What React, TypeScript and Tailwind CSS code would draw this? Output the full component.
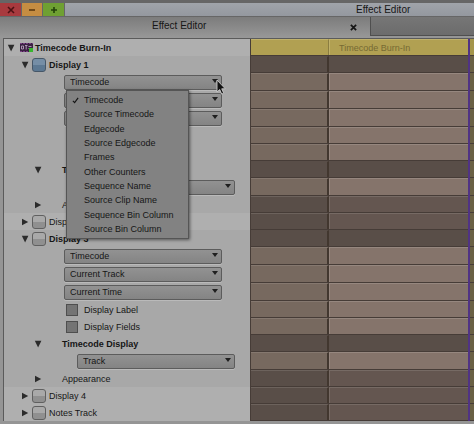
import { useState } from "react";
import type { ReactNode } from "react";

type RowKind = "effect" | "group" | "select" | "check" | "section" | "param";
type Tone = "yellow" | "dark" | "light" | "muted";

interface Row {
  id: string;
  kind: RowKind;
  label: string;
  tone: Tone;
  name?: string;
  open?: boolean;
  enabled?: boolean;
  nested?: boolean;
  showMenu?: boolean;
}

const ROWS: Row[] = [
  { id: "fx", kind: "effect", label: "Timecode Burn-In", tone: "yellow", open: true },
  { id: "d1", kind: "group", label: "Display 1", tone: "dark", open: true, enabled: true },
  { id: "d1-source", kind: "select", label: "Timecode", name: "Source", tone: "light", showMenu: true },
  { id: "d1-track", kind: "select", label: "", name: "Track", tone: "light" },
  { id: "d1-time", kind: "select", label: "", name: "Time", tone: "light" },
  { id: "d1-label", kind: "check", label: "", name: "Display Label", tone: "light" },
  { id: "d1-fields", kind: "check", label: "", name: "Display Fields", tone: "light" },
  { id: "d1-display", kind: "section", label: "Timecode Display", tone: "dark", open: true },
  { id: "d1-type", kind: "select", label: "", name: "Display type", tone: "light", nested: true },
  { id: "d1-look", kind: "param", label: "Appearance", tone: "muted" },
  { id: "d2", kind: "group", label: "Display 2", tone: "muted" },
  { id: "d3", kind: "group", label: "Display 3", tone: "dark", open: true },
  { id: "d3-source", kind: "select", label: "Timecode", name: "Source", tone: "light" },
  { id: "d3-track", kind: "select", label: "Current Track", name: "Track", tone: "light" },
  { id: "d3-time", kind: "select", label: "Current Time", name: "Time", tone: "light" },
  { id: "d3-label", kind: "check", label: "Display Label", tone: "light" },
  { id: "d3-fields", kind: "check", label: "Display Fields", tone: "light" },
  { id: "d3-display", kind: "section", label: "Timecode Display", tone: "dark", open: true },
  { id: "d3-type", kind: "select", label: "Track", name: "Display type", tone: "light", nested: true },
  { id: "d3-look", kind: "param", label: "Appearance", tone: "muted" },
  { id: "d4", kind: "group", label: "Display 4", tone: "muted" },
  { id: "notes", kind: "group", label: "Notes Track", tone: "muted" },
];

const SOURCES = [
  "Timecode",
  "Source Timecode",
  "Edgecode",
  "Source Edgecode",
  "Frames",
  "Other Counters",
  "Sequence Name",
  "Source Clip Name",
  "Sequence Bin Column",
  "Source Bin Column",
];

const TONES: Record<Tone, [string, string]> = {
  yellow: ["bg-[#b1a052] border-t-[#c0b16a]", "bg-[#b1a052] border-[#c0b16a]"],
  dark: ["bg-[#594e48] border-t-[#594e48]", "bg-[#594e48] border-[#594e48]"],
  light: ["bg-[#77695f] border-t-[#85786f]", "bg-[#85746b] border-[#96877f]"],
  muted: ["bg-[#594e48] border-t-[#6c625c]", "bg-[#645650] border-[#766a64]"],
};

function Triangle({ open }: { open?: boolean }) {
  return (
    <button aria-label={open ? "Collapse" : "Expand"} className="w-2 shrink-0">
      <svg viewBox="0 0 8 8" className="size-2 fill-[#2b2b2b]">
        {open ? <path d="M0.8 0.8h6.6L4.1 7.4z" /> : <path d="M1 0.8v6.4l6.2-3.2z" />}
      </svg>
    </button>
  );
}

function EffectIcon() {
  return (
    <svg viewBox="0 0 13 9" className="h-[9px] w-[13px] shrink-0">
      <rect width="13" height="9" fill="#3a2142" />
      <path d="M0 .5h13M0 8.5h9" stroke="#793f82" strokeDasharray="2 1" />
      <path
        d="M1.5 3h2v3h-2zM5 2.5h2.5M6.2 2.5v4M8.5 3.5h3M8.5 5.5h1.5"
        fill="none"
        stroke="#b6a2bb"
        strokeWidth=".9"
      />
      <rect x="9" y="5" width="4" height="4" fill="#38b52f" />
    </svg>
  );
}

function Toggle({ label, on }: { label: string; on?: boolean }) {
  const [checked, setChecked] = useState(!!on);
  return (
    <input
      type="checkbox"
      aria-label={`Enable ${label}`}
      checked={checked}
      onChange={(e) => setChecked(e.target.checked)}
      className="size-[14px] shrink-0 appearance-none rounded-[3px] border border-[#606060] bg-linear-to-b from-[#a9a9a9] from-50% to-[#909090] to-50% checked:border-[#465768] checked:from-[#758ea6] checked:to-[#5c7892]"
    />
  );
}

function SourceMenu({ value, onPick }: { value: string; onPick: (v: string) => void }) {
  return (
    <ul className="absolute top-[15px] left-[2px] z-10 flex h-[149px] w-[123px] flex-col border border-[#555] bg-[#828282] py-[2px] shadow-[1px_1px_3px_rgba(0,0,0,0.5)]">
      {SOURCES.map((source) => (
        <li key={source} className="flex flex-1">
          <button
            onClick={() => onPick(source)}
            className="flex flex-1 items-center text-left whitespace-nowrap"
          >
            <span className="flex w-[17px] justify-center">
              {source === value && (
                <svg viewBox="0 0 8 8" className="size-[7px]">
                  <path d="M1 4.5l2 2L7 1" fill="none" stroke="#151515" strokeWidth="1.3" />
                </svg>
              )}
            </span>
            {source}
          </button>
        </li>
      ))}
    </ul>
  );
}

function ParamSelect({ row }: { row: Row }) {
  const [value, setValue] = useState(row.label);
  const [menuOpen, setMenuOpen] = useState(!!row.showMenu);
  const options = row.label === "Timecode" ? SOURCES : [row.label];

  return (
    <div className="relative w-[158px]">
      <select
        aria-label={row.name}
        value={value}
        onChange={(e) => setValue(e.target.value)}
        className="block h-[15px] w-full appearance-none rounded-[2px] border border-[#5c5c5c] bg-linear-to-b from-[#929292] to-[#848484] px-[5px] leading-[13px] shadow-[0_1px_0_#bababa]"
      >
        {options.map((o) => (
          <option key={o}>{o}</option>
        ))}
      </select>
      <svg viewBox="0 0 6 4" className="pointer-events-none absolute top-1 right-1 h-1 w-[6px]">
        <path d="M0 0h6L3 4z" fill="#1f1f1f" />
      </svg>
      {menuOpen && (
        <SourceMenu
          value={value}
          onPick={(v) => {
            setValue(v);
            setMenuOpen(false);
          }}
        />
      )}
      {row.showMenu && (
        <svg
          viewBox="0 0 10 16"
          className="pointer-events-none absolute top-1 -right-1 z-20 h-4 w-[10px]"
        >
          <path
            d="M1 1v12l2.7-2.5 2 4.6 2-.9-2-4.4h3.6z"
            fill="#111"
            stroke="#c9c9c9"
            strokeWidth=".9"
          />
        </svg>
      )}
    </div>
  );
}

function RowControls({ row }: { row: Row }): ReactNode {
  switch (row.kind) {
    case "effect":
      return (
        <div className="flex items-center pl-[3px]">
          <Triangle open={row.open} />
          <span className="w-[5px]" />
          <EffectIcon />
          <span className="pl-[2px] font-bold">{row.label}</span>
        </div>
      );
    case "group":
      return (
        <div className="flex items-center gap-[3px] pl-[17px]">
          <Triangle open={row.open} />
          <Toggle label={row.label} on={row.enabled} />
          <span className={row.open ? "font-bold" : ""}>{row.label}</span>
        </div>
      );
    case "select":
      return (
        <div className={row.nested ? "self-end pb-px pl-[73px]" : "self-end pb-px pl-[60px]"}>
          <ParamSelect row={row} />
        </div>
      );
    case "check":
      return (
        <label className="flex items-center gap-[6px] pl-[62px]">
          <input
            type="checkbox"
            aria-label={row.name}
            className="size-3 appearance-none border border-[#4e4e4e] bg-[#747474] checked:bg-[#444]"
          />
          {row.label}
        </label>
      );
    default:
      return (
        <div className="flex items-center pl-[30px]">
          <Triangle open={row.open} />
          <span className={row.kind === "section" ? "pl-5 font-bold" : "pl-5"}>{row.label}</span>
        </div>
      );
  }
}

function EffectRow({ row }: { row: Row }) {
  const [before, after] = TONES[row.tone];
  const height = row.kind === "select" ? "h-[18px]" : "h-[17px]";
  const band =
    row.kind === "effect" || (row.kind === "group" && !row.open) ? "bg-[#afafaf]" : "bg-[#a8a8a8]";

  return (
    <div className={`flex ${height}`}>
      <div className={`flex w-[246px] shrink-0 items-center whitespace-nowrap ${band}`}>
        <RowControls row={row} />
      </div>
      <div className="flex flex-1 border-b border-l border-[#463c37]">
        <div
          className={`w-[78px] border-t ${before} ${
            row.tone === "yellow" ? "border-r border-r-[#8b7d40]" : "border-r-2 border-r-[#42372f]"
          }`}
        />
        <div className={`flex flex-1 items-center border-t border-l pl-[9px] text-[#766a33] ${after}`}>
          {row.kind === "effect" && row.label}
        </div>
        <div className="-mb-px w-[2px] bg-[#503384]" />
        <div className={row.tone === "yellow" ? "w-1 bg-[#a4954a]" : "w-1 bg-[#696044]"} />
      </div>
    </div>
  );
}

export default function App() {
  return (
    <div className="flex min-h-screen flex-col overflow-hidden bg-[#959595] font-['Liberation_Sans',Arial,sans-serif] text-[9px] leading-3 text-[#161616]">
      <div className="h-[3px] bg-[#666]" />
      <header className="flex h-[14px] border-b border-[#666] bg-linear-to-b from-[#a0a4aa] to-[#94989f]">
        <button aria-label="Close" className="flex w-[22px] items-center justify-center border-r border-[#666] bg-[#a83a3e]">
          <svg viewBox="0 0 8 8" className="size-2">
            <path d="M1 1l6 6M7 1L1 7" stroke="#4c1113" strokeWidth="1.6" />
          </svg>
        </button>
        <button aria-label="Minimize" className="flex w-[21px] items-center justify-center border-r border-[#666] bg-[#c58d42]">
          <svg viewBox="0 0 8 8" className="size-2">
            <path d="M1 4h6" stroke="#54350e" strokeWidth="1.5" />
          </svg>
        </button>
        <button aria-label="Zoom" className="flex w-[22px] items-center justify-center border-r border-[#666] bg-[#6fa032]">
          <svg viewBox="0 0 8 8" className="size-2">
            <path d="M1 4h6M4 1v6" stroke="#24420b" strokeWidth="1.6" />
          </svg>
        </button>
        <h1 className="flex-1 pl-[291px] text-[10px] leading-[14px] whitespace-nowrap">Effect Editor</h1>
      </header>

      <div className="flex h-[21px]">
        <div className="flex w-[370px] items-center bg-linear-to-b from-[#7c7c7c] to-[#989898]">
          <span className="w-[350px] pb-1 pl-[152px] text-[10px]">Effect Editor</span>
          <button aria-label="Close tab">
            <svg viewBox="0 0 8 8" className="size-[7px]">
              <path d="M1 1l6 6M7 1L1 7" stroke="#151515" strokeWidth="2" />
            </svg>
          </button>
        </div>
        <div className="mb-[2px] flex-1 border-b border-l border-[#4f4f4f] bg-linear-to-b from-[#767676] to-[#6c6c6c]" />
      </div>

      <main className="ml-[3px] border-t border-l border-[#5b5b5b]">
        {ROWS.map((row) => (
          <EffectRow key={row.id} row={row} />
        ))}
      </main>
    </div>
  );
}
